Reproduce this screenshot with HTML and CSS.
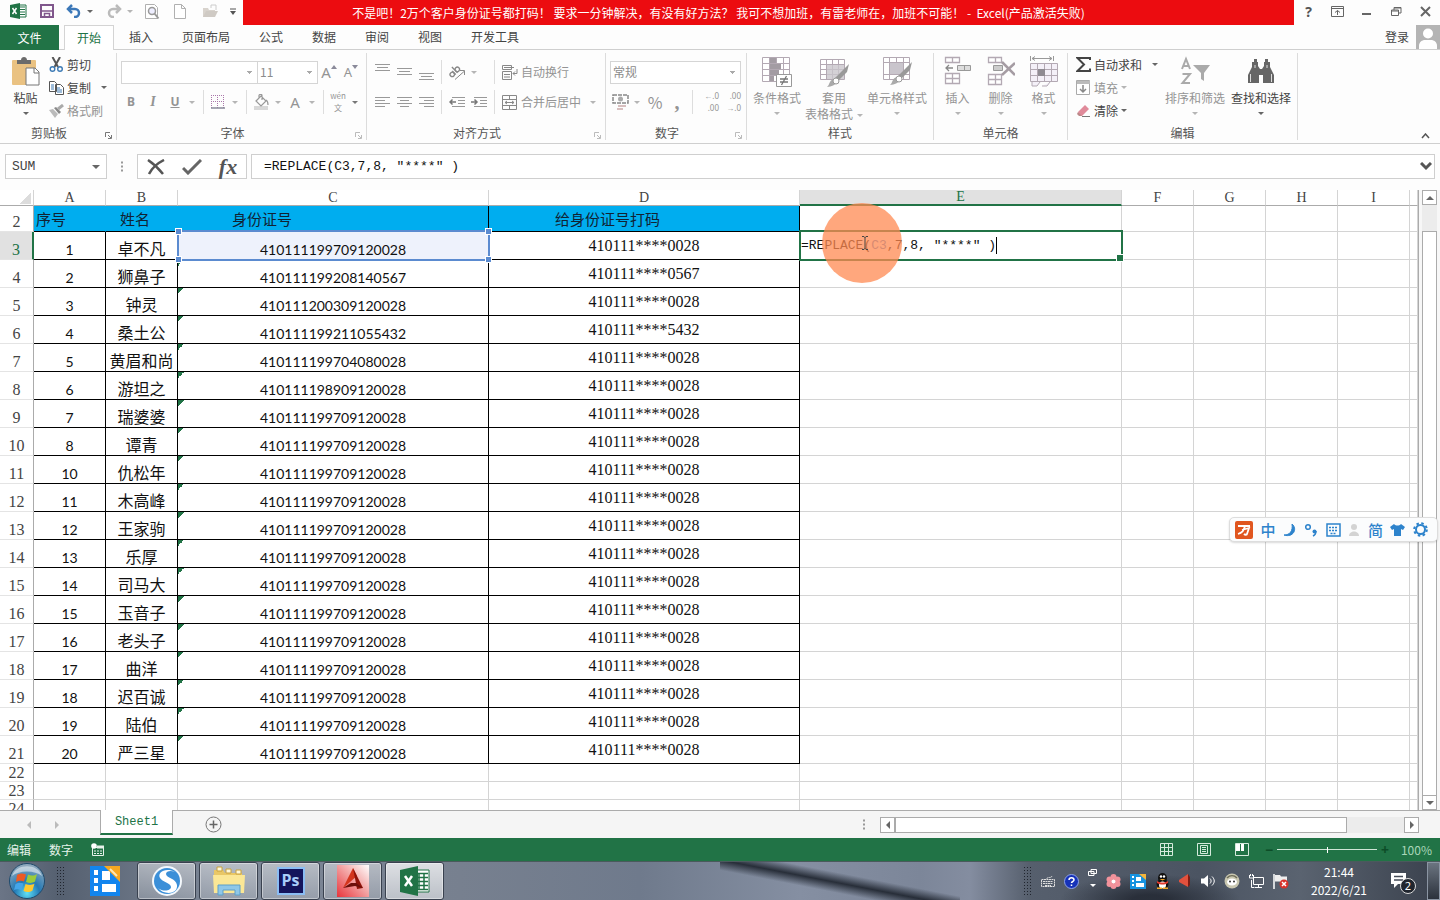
FILE: index.html
```html
<!DOCTYPE html>
<html lang="zh-CN">
<head>
    <meta charset="utf-8">
    <title>Excel</title>
    <link rel="stylesheet" href="styles.css">
</head>
<body>
    <header class="titlebar">
        <div class="quick">
            <span class="q w36"><svg width="18" height="18" viewBox="0 0 18 18"><path d="M9 3h8v12H9z" fill="#fff" stroke="#217346"/><path d="M11 5h5M11 7.500h5M11 10h5M11 12.500h5" stroke="#217346"/><path d="M1 3l10-2v16L1 15z" fill="#217346"/><path d="M3.500 6l4 6M7.500 6l-4 6" stroke="#fff" stroke-width="1.500"/></svg></span>
            <button class="q w22" aria-label="保存"><svg width="14" height="14" viewBox="0 0 14 14"><path d="M1 1h12v12H1z" fill="none" stroke="#80578c" stroke-width="2"/><path d="M2 7h10M4.500 13V9.500h5V13" fill="none" stroke="#80578c" stroke-width="1.500"/></svg></button>
            <button class="q w40" aria-label="撤消"><svg width="16" height="14" viewBox="0 0 16 14"><path d="M2 5h7a4 4 0 0 1 0 8H8" fill="none" stroke="#3c78b8" stroke-width="2.500"/><path d="M6 1L2 5l4 4" fill="none" stroke="#3c78b8" stroke-width="2.500"/></svg><i class="caret"></i></button>
            <button class="q w40 dim" aria-label="恢复"><svg width="16" height="14" viewBox="0 0 16 14"><path d="M14 5H7a4 4 0 0 0 0 8h1M10 1l4 4-4 4" fill="none" stroke="#bbb" stroke-width="2.500"/></svg><i class="caret"></i></button>
            <button class="q w28" aria-label="打印预览"><svg width="16" height="17" viewBox="0 0 16 17"><path d="M1.500 1.500h9l3 3v11h-12z" fill="#fff" stroke="#b0b0b0"/><circle cx="8" cy="8" r="3.500" fill="#eef" stroke="#999" stroke-width="1.500"/><path d="M10.500 10.500l4 5" stroke="#999" stroke-width="2"/></svg></button>
            <button class="q w28" aria-label="新建"><svg width="12" height="15" viewBox="0 0 12 15"><path d="M.5.5h7l4 4v10H.5zM7.500.5v4h4" fill="#fff" stroke="#b0b0b0"/></svg></button>
            <button class="q w32" aria-label="打开"><svg width="16" height="14" viewBox="0 0 16 14"><path d="M1 13V4h5l1 2h6v7z" fill="#d8d3cd"/><path d="M9 4V1h5v5" fill="none" stroke="#ccc"/><path d="M1 13l3-6h12l-3 6z" fill="#cfcac4"/></svg></button>
            <button class="q w14" aria-label="自定义"><svg width="6" height="7" viewBox="0 0 6 7"><path d="M0 1h6" stroke="#555"/><path d="M0 3h6L3 7z" fill="#555"/></svg></button>
        </div>
        <h1 class="title">不是吧！2万个客户身份证号都打码！ 要求一分钟解决，有没有好方法？ 我可不想加班，有雷老师在，加班不可能！ -&nbsp; Excel(产品激活失败)</h1>
        <div class="winbtns">
            <button class="help">?</button>
            <button aria-label="功能区显示选项"><svg width="13" height="11" viewBox="0 0 13 11"><path d="M.5.5h12v10H.5zM.5 2.500h12M6.500 9V4.500M4 6.500l2.500-2L9 6.500" fill="none" stroke="#666"/></svg></button>
            <button aria-label="最小化"><svg width="10" height="10" viewBox="0 0 10 10"><path d="M0 7h9" stroke="#666" stroke-width="2"/></svg></button>
            <button aria-label="还原"><svg width="11" height="11" viewBox="0 0 11 11"><path d="M.5 4h7v5.500h-7zM.5 5h7M3 4V1.500h7v5.500H8M3 2h7" fill="none" stroke="#666"/></svg></button>
            <button aria-label="关闭"><svg width="11" height="11" viewBox="0 0 11 11"><path d="M1 1l9 9M10 1l-9 9" stroke="#666" stroke-width="2"/></svg></button>
        </div>
    </header>

    <nav class="tabs">
        <button class="file">文件</button>
        <button class="tab active">开始</button>
        <button class="tab">插入</button>
        <button class="tab">页面布局</button>
        <button class="tab">公式</button>
        <button class="tab">数据</button>
        <button class="tab">审阅</button>
        <button class="tab">视图</button>
        <button class="tab">开发工具</button>
        <a class="login" href="#">登录</a>
        <svg class="avatar" width="24" height="24" viewBox="0 0 24 24"><rect width="24" height="24" fill="#b4b4b4"/><circle cx="12" cy="8.500" r="5" fill="#fff"/><path d="M3 24v-3c0-4 3-6 6-6h6c3 0 6 2 6 6v3z" fill="#fff"/></svg>
    </nav>

    <section class="ribbon">
        <div class="group g-clip">
            <div class="body">
                <button class="big w42"><svg width="30" height="32" viewBox="0 0 30 32"><rect x="1" y="4" width="24" height="25" rx="1" fill="#eac282"/><path d="M6 8V4h4c0-4 6-4 6 0h4v4z" fill="#6b6b6b"/><path d="M15 12h9l4 4v13H15z" fill="#fff" stroke="#777"/><path d="M23 12v5h5" fill="none" stroke="#777"/></svg><span>粘贴</span><i class="caret"></i></button>
                <div class="stack">
                    <button><svg width="15" height="15" viewBox="0 0 15 15"><path d="M3.500 0l5.500 10M11 0L5.500 10" stroke="#555" stroke-width="2"/><circle cx="3.500" cy="12" r="2.300" fill="none" stroke="#3c7ab5" stroke-width="1.400"/><circle cx="11" cy="12" r="2.300" fill="none" stroke="#3c7ab5" stroke-width="1.400"/></svg>剪切</button>
                    <button><svg width="15" height="14" viewBox="0 0 15 14"><path d="M.5.5h5l2 2v8h-7zM6.500 3.500h5l3 3v7h-8z" fill="#fff" stroke="#555"/><path d="M2 4h3M2 6h3M2 8h3M8 7h3M8 9h5M8 11h5" stroke="#3c7ab5"/></svg>复制<i class="caret far"></i></button>
                    <button class="dim"><svg width="15" height="14" viewBox="0 0 15 14"><path d="M0 6l4-1 5 5-3 4z" fill="#bbb"/><path d="M5 4l2-1 5 5-2 2z" fill="#888"/><path d="M9 5l5-4" stroke="#aaa" stroke-width="3"/></svg>格式刷</button>
                </div>
            </div>
            <div class="label">剪贴板<svg class="launch" width="7" height="7" viewBox="0 0 7 7"><path d="M.5 5V.5H5M3 3l3 3M6.500 3v3.500H3" fill="none" stroke="#777"/></svg></div>
        </div>

        <div class="group g-font dim">
            <div class="body rows">
                <div class="row">
                    <select class="combo font-name" aria-label="字体"><option></option></select>
                    <select class="combo font-size" aria-label="字号"><option>11</option></select>
                    <button class="w22 grow-a">A<svg width="6" height="4" viewBox="0 0 6 4"><path d="M3 0l3 4H0z" fill="#8a8a9a"/></svg></button>
                    <button class="w22 grow-a small">A<svg width="6" height="4" viewBox="0 0 6 4"><path d="M3 4l3-4H0z" fill="#8a8a9a"/></svg></button>
                </div>
                <div class="row">
                    <button class="w20"><b>B</b></button>
                    <button class="w24 ital"><i>I</i></button>
                    <button class="w34"><b class="icon20"><u>U</u></b><i class="caret"></i></button>
                    <span class="sep"></span>
                    <button class="w34" aria-label="边框"><span class="icon20"><svg width="14" height="14" viewBox="0 0 14 14"><path d="M.5 0v13M6.500 0v13M12.500 0v13M0 .5h13M0 6.500h13" stroke="#a7a" stroke-dasharray="1 1" fill="none"/><path d="M0 13h14" stroke="#889" stroke-width="1.500"/></svg></span><i class="caret"></i></button>
                    <span class="sep"></span>
                    <button class="w34" aria-label="填充颜色"><span class="icon20"><svg width="17" height="16" viewBox="0 0 17 16"><rect x="1" y="12" width="14" height="4" fill="#d8d8d8"/><path d="M3 7l5-5 5 5-5 5zM6 5V1.500c0-1.500 3-1.500 3 0V6M13 6c2 1 2 3 2 5" fill="none" stroke="#999" stroke-width="1.200"/></svg></span><i class="caret"></i></button>
                    <button class="w34"><span class="icon20 big-a">A</span><i class="caret"></i></button>
                    <span class="sep"></span>
                    <button class="w34"><span class="icon20 wen"><span>wén</span><span>文</span></span><i class="caret dark"></i></button>
                </div>
            </div>
            <div class="label">字体<svg class="launch" width="7" height="7" viewBox="0 0 7 7"><path d="M.5 5V.5H5M3 3l3 3M6.500 3v3.500H3" fill="none" stroke="#bbb"/></svg></div>
        </div>

        <div class="group g-align dim">
            <div class="body rows">
                <div class="row">
                    <button class="w22" aria-label="顶端对齐"><svg width="15" height="16" viewBox="0 0 15 16"><path d="M0 .5h15M2 3.500h11M0 6.500h15" stroke="#999"/></svg></button>
                    <button class="w22" aria-label="垂直居中"><svg width="15" height="16" viewBox="0 0 15 16"><path d="M0 4.500h15M2 7.500h11M0 10.500h15" stroke="#999"/></svg></button>
                    <button class="w22" aria-label="底端对齐"><svg width="15" height="16" viewBox="0 0 15 16"><path d="M0 9.500h15M2 12.500h11M0 15.500h15" stroke="#999"/></svg></button>
                    <span class="sep"></span>
                    <button class="w44" aria-label="方向"><span class="icon22"><svg width="18" height="17" viewBox="0 0 18 17"><g fill="none" stroke="#888" stroke-width="1.300" transform="rotate(-45 6 8)"><circle cx="3" cy="8.500" r="2.200"/><path d="M5.500 6v5M8 3v8"/><circle cx="10.200" cy="8.500" r="2.200"/></g><path d="M7 15.500l9-8M12 6.500h4.500V11" stroke="#888" fill="none"/></svg></span><i class="caret"></i></button>
                    <span class="sep"></span>
                    <button class="text"><svg width="16" height="15" viewBox="0 0 16 15"><path d="M.5.5h9v4h-9zM.5 6.500h9v8h-9zM2 2.500h10M2 9.500h6M2 12h6M15 4v4.500H11M13 6.500l-2 2 2 2" fill="none" stroke="#888"/></svg>自动换行</button>
                </div>
                <div class="row">
                    <button class="w22" aria-label="左对齐"><svg width="15" height="11" viewBox="0 0 15 11"><path d="M0 .5h15M0 3.500h10M0 6.500h15M0 9.500h10" stroke="#999"/></svg></button>
                    <button class="w22" aria-label="居中"><svg width="15" height="11" viewBox="0 0 15 11"><path d="M0 .5h15M3 3.500h9M0 6.500h15M3 9.500h9" stroke="#999"/></svg></button>
                    <button class="w22" aria-label="右对齐"><svg width="15" height="11" viewBox="0 0 15 11"><path d="M0 .5h15M5 3.500h10M0 6.500h15M5 9.500h10" stroke="#999"/></svg></button>
                    <span class="sep"></span>
                    <button class="w22" aria-label="减少缩进"><svg width="16" height="11" viewBox="0 0 16 11"><path d="M3 .5h13M9 3.500h7M9 6.500h7M3 9.500h13" stroke="#999"/><path d="M1 5h6M3.500 2.500L1 5l2.500 2.500" stroke="#777" fill="none" stroke-width="1.500"/></svg></button>
                    <button class="w22" aria-label="增加缩进"><svg width="16" height="11" viewBox="0 0 16 11"><path d="M3 .5h13M9 3.500h7M9 6.500h7M3 9.500h13" stroke="#999"/><path d="M0 5h6M3.500 2.500L6 5 3.500 7.500" stroke="#777" fill="none" stroke-width="1.500"/></svg></button>
                    <span class="sep"></span>
                    <button class="text"><svg width="16" height="15" viewBox="0 0 16 15"><path d="M.5.5h14v14H.5zM.5 4.500h14M.5 10.500h14M7.500 0v4M7.500 11v4M3 7.500h9M5 6L3 7.500 5 9M10 6l2 1.500L10 9" fill="none" stroke="#888"/></svg>合并后居中<i class="caret"></i></button>
                </div>
            </div>
            <div class="label">对齐方式<svg class="launch" width="7" height="7" viewBox="0 0 7 7"><path d="M.5 5V.5H5M3 3l3 3M6.500 3v3.500H3" fill="none" stroke="#bbb"/></svg></div>
        </div>

        <div class="group g-num dim">
            <div class="body rows">
                <div class="row"><select class="combo format" aria-label="数字格式"><option>常规</option></select></div>
                <div class="row">
                    <button class="w34" aria-label="会计数字格式"><span class="icon20"><svg width="17" height="16" viewBox="0 0 17 16"><path d="M1 1h15v8H1z" fill="none" stroke="#888" stroke-width="1.500" stroke-dasharray="4 1"/><circle cx="8.500" cy="5" r="2.500" fill="#aaa"/><path d="M6 12h8M5 15h6" stroke="#caa" stroke-width="1.500"/></svg></span><i class="caret"></i></button>
                    <button class="w22 pct">%</button>
                    <button class="w22 comma">,</button>
                    <span class="sep"></span>
                    <button class="w22 dec"><span>←.0</span><span>.00</span></button>
                    <button class="w22 dec"><span>.00</span><span>→.0</span></button>
                </div>
            </div>
            <div class="label">数字<svg class="launch" width="7" height="7" viewBox="0 0 7 7"><path d="M.5 5V.5H5M3 3l3 3M6.500 3v3.500H3" fill="none" stroke="#bbb"/></svg></div>
        </div>

        <div class="group g-style dim">
            <div class="body">
                <button class="big w56"><svg width="30" height="32" viewBox="0 0 30 32"><path d="M.5 1.500h27v24H.5zM0 7.500h28M0 13.500h28M0 19.500h28M7.500 1v24M14.500 1v24M21.500 1v24" fill="#fff" stroke="#b3a9b3"/><path d="M8 2h6v5H8zM8 8h11v5H8zM8 14h9v5H8zM8 20h4v5H8z" fill="#a39ca3"/><path d="M14.500 18.500h15v12h-15z" fill="#fff" stroke="#999"/><path d="M18 23h8M18 26h8M24.500 20l-5 9" stroke="#777" stroke-width="1.300"/></svg><span>条件格式</span><i class="caret"></i></button>
                <button class="big w58"><svg width="30" height="32" viewBox="0 0 30 32"><path d="M1.500 3.500h24v20h-24zM1 8.500h25M1 13.500h25M1 18.500h25M7.500 3v20M13.500 3v20M19.500 3v20" fill="#fff" stroke="#b3a9b3"/><path d="M8 9h17v14H8z" fill="#c9c5cc" opacity=".8"/><path d="M30 8l-2 8-9 9-3-3z" fill="#999"/><path d="M8 31c3-2 2-8 8-8 5 1 2 7-8 8z" fill="#aaa"/><circle cx="17" cy="25" r="3" fill="#fff" stroke="#999"/></svg><span>套用</span><span>表格格式<i class="caret"></i></span></button>
                <button class="big w68"><svg width="30" height="32" viewBox="0 0 30 32"><path d="M1.500 1.500h26v22h-26zM1 6.500h27M1 18.500h27M7.500 1v23M14.500 1v6M21.500 1v23" fill="#fff" stroke="#b3a9b3"/><path d="M8 7h13v11H8z" fill="#c9c5cc"/><path d="M30 6l-2 8-9 9-3-3z" fill="#999"/><path d="M8 29c3-2 2-8 8-8 5 1 2 7-8 8z" fill="#aaa"/><circle cx="17" cy="23" r="3" fill="#fff" stroke="#999"/></svg><span>单元格样式</span><i class="caret"></i></button>
            </div>
            <div class="label">样式</div>
        </div>

        <div class="group g-cells dim">
            <div class="body">
                <button class="big w42"><svg width="28" height="32" viewBox="0 0 28 32"><path d="M1.500 1.500h14v5h-14zM8.500 1v6M1.500 17.500h14v10h-14zM1.500 22.500h14M8.500 17v11" fill="#fff" stroke="#b3a9b3" stroke-width="1.300"/><path d="M13.500 9.500h13v5h-13zM20.500 9v6" fill="#ddd" stroke="#999"/><path d="M2 12h7M5 9l-3 3 3 3" fill="none" stroke="#888" stroke-width="1.300"/></svg><span>插入</span><i class="caret"></i></button>
                <button class="big w42"><svg width="28" height="32" viewBox="0 0 28 32"><path d="M1.500 1.500h13v5h-13zM8.500 1v6M1.500 18.500h13v10h-13zM1.500 23.500h13M8.500 18v11" fill="#fff" stroke="#b3a9b3" stroke-width="1.300"/><path d="M6.500 9.500h9v5h-9z" fill="#ccc" stroke="#999"/><path d="M15 6l13 13M28 7L15 19" stroke="#a59ca3" stroke-width="2.500"/></svg><span>删除</span><i class="caret"></i></button>
                <button class="big w42"><svg width="28" height="32" viewBox="0 0 28 32"><path d="M.5 0v5M23.500 0v5M2 2.500h20M5 .5l-3 2 3 2M19 .5l3 2-3 2" fill="none" stroke="#999"/><path d="M.5 7.500h27v18H.5zM0 13.500h28M0 19.500h28M7.500 7v19M14.500 7v19M21.500 7v19M2 26v4h5l3-4M12 30h5l3-4" fill="#f4f0f8" stroke="#b3a9b3"/><path d="M8 13h7v7H8z" fill="#8f8b92"/></svg><span>格式</span><i class="caret"></i></button>
            </div>
            <div class="label">单元格</div>
        </div>

        <div class="group g-edit">
            <div class="body">
                <div class="stack">
                    <button><svg width="15" height="15" viewBox="0 0 15 15"><path d="M14 3V1H1.500L8 7.500 1.500 14H14v-2.500" fill="none" stroke="#444" stroke-width="2"/></svg>自动求和<i class="caret far"></i></button>
                    <button class="dim"><svg width="15" height="15" viewBox="0 0 15 15"><path d="M.5.5h13v14H.5z" fill="#fff" stroke="#aaa"/><path d="M1 1h13v3H1z" fill="#bbb"/><path d="M7 5v7M4 9l3 3 3-3" fill="none" stroke="#888" stroke-width="1.500"/></svg>填充<i class="caret"></i></button>
                    <button><svg width="15" height="13" viewBox="0 0 15 13"><path d="M2 8l7-7 4 4-7 7H4z" fill="#e08a9a"/><path d="M2 8l4 4H3L1 10z" fill="#b88"/><path d="M6 12.500h8" stroke="#777"/></svg>清除<i class="caret"></i></button>
                </div>
                <button class="big w66 dim"><svg width="30" height="32" viewBox="0 0 30 32"><path d="M2 13L6 3l4 10M3.500 10h5" fill="none" stroke="#aaa" stroke-width="2"/><path d="M2.500 18H10l-7.500 9H10" fill="none" stroke="#aaa" stroke-width="2"/><path d="M13 9h17l-6 8v8l-3-2v-6z" fill="#aaa"/></svg><span>排序和筛选</span><i class="caret"></i></button>
                <button class="big w66"><svg width="28" height="32" viewBox="0 0 28 32"><path d="M5 6h6v4l2 3h2l2-3V6h6v5l4 8v8H16v-8h-4v8H1v-8l4-8z" fill="#666"/><path d="M7 3h3v3H7zM18 3h3v3h-3z" fill="#666"/><path d="M3.500 18v8M24.500 18v8M8 9v3M20 9v3" stroke="#ddd"/></svg><span>查找和选择</span><i class="caret"></i></button>
            </div>
            <div class="label">编辑</div>
        </div>
        <button class="collapse" aria-label="折叠功能区"><svg width="9" height="6" viewBox="0 0 9 6"><path d="M1 5l3.500-4L8 5" fill="none" stroke="#555" stroke-width="1.500"/></svg></button>
    </section>

    <section class="formula-bar">
        <div class="namebox"><input type="text" value="SUM" aria-label="名称框"><i class="caret"></i></div>
        <span class="dots"></span>
        <div class="fx-buttons">
            <button aria-label="取消"><svg width="18" height="16" viewBox="0 0 18 16"><path d="M1 1c6 4 11 9 15 14M17 1C11 4 5 9 2 15" fill="none" stroke="#555" stroke-width="2.500"/></svg></button>
            <button aria-label="输入"><svg width="20" height="16" viewBox="0 0 20 16"><path d="M1 9l5 5L19 1" fill="none" stroke="#666" stroke-width="3"/></svg></button>
            <button class="fx" aria-label="插入函数"><i>fx</i></button>
        </div>
        <div class="formula"><input type="text" aria-label="编辑栏" value="=REPLACE(C3,7,8, &quot;****&quot; )"><svg width="12" height="9" viewBox="0 0 12 9"><path d="M1 1l5 5 5-5" fill="none" stroke="#555" stroke-width="3"/></svg></div>
    </section>

    <main class="sheet">
        <div class="grid">
            <table>
                <colgroup><col class="c-head"><col class="c-std"><col class="c-std"><col class="c-wide"><col class="c-wide"><col class="c-e"><col class="c-std"><col class="c-std"><col class="c-std"><col class="c-std"><col></colgroup>
                <thead><tr><th class="corner"></th><th>A</th><th>B</th><th>C</th><th>D</th><th class="sel">E</th><th>F</th><th>G</th><th>H</th><th>I</th><th></th></tr></thead>
                <tbody class="head">
                    <tr><th>2</th><td>序号</td><td>姓名</td><td>身份证号</td><td>给身份证号打码</td><td></td><td></td><td></td><td></td><td></td><td></td></tr>
                </tbody>
                <tbody class="data">
                    <tr class="current"><th>3</th><td>1</td><td>卓不凡</td><td class="ref">410111199709120028<span class="ref-box"><i></i><i></i><i></i><i></i></span></td><td>410111****0028</td><td class="edit"><span class="edit-box">=REPLACE(<em>C3</em>,7,8, "****" )</span><span class="click"></span><svg class="ibeam" width="8" height="14" viewBox="0 0 8 14"><path d="M1 .5h2l1 1 1-1h2M4 1v12M1 13.500h2l1-1 1 1h2" fill="none" stroke="#444"/></svg></td><td></td><td></td><td></td><td></td><td></td></tr>
                    <tr><th>4</th><td>2</td><td>狮鼻子</td><td>410111199208140567</td><td>410111****0567</td><td></td><td></td><td></td><td></td><td></td><td></td></tr>
                    <tr><th>5</th><td>3</td><td>钟灵</td><td>410111200309120028</td><td>410111****0028</td><td></td><td></td><td></td><td></td><td></td><td></td></tr>
                    <tr><th>6</th><td>4</td><td>桑土公</td><td>410111199211055432</td><td>410111****5432</td><td></td><td></td><td></td><td></td><td></td><td></td></tr>
                    <tr><th>7</th><td>5</td><td>黄眉和尚</td><td>410111199704080028</td><td>410111****0028</td><td></td><td></td><td></td><td></td><td></td><td></td></tr>
                    <tr><th>8</th><td>6</td><td>游坦之</td><td>410111198909120028</td><td>410111****0028</td><td></td><td></td><td></td><td></td><td></td><td></td></tr>
                    <tr><th>9</th><td>7</td><td>瑞婆婆</td><td>410111199709120028</td><td>410111****0028</td><td></td><td></td><td></td><td></td><td></td><td></td></tr>
                    <tr><th>10</th><td>8</td><td>谭青</td><td>410111199709120028</td><td>410111****0028</td><td></td><td></td><td></td><td></td><td></td><td></td></tr>
                    <tr><th>11</th><td>10</td><td>仇松年</td><td>410111199709120028</td><td>410111****0028</td><td></td><td></td><td></td><td></td><td></td><td></td></tr>
                    <tr><th>12</th><td>11</td><td>木高峰</td><td>410111199709120028</td><td>410111****0028</td><td></td><td></td><td></td><td></td><td></td><td></td></tr>
                    <tr><th>13</th><td>12</td><td>王家驹</td><td>410111199709120028</td><td>410111****0028</td><td></td><td></td><td></td><td></td><td></td><td></td></tr>
                    <tr><th>14</th><td>13</td><td>乐厚</td><td>410111199709120028</td><td>410111****0028</td><td></td><td></td><td></td><td></td><td></td><td></td></tr>
                    <tr><th>15</th><td>14</td><td>司马大</td><td>410111199709120028</td><td>410111****0028</td><td></td><td></td><td></td><td></td><td></td><td></td></tr>
                    <tr><th>16</th><td>15</td><td>玉音子</td><td>410111199709120028</td><td>410111****0028</td><td></td><td></td><td></td><td></td><td></td><td></td></tr>
                    <tr><th>17</th><td>16</td><td>老头子</td><td>410111199709120028</td><td>410111****0028</td><td></td><td></td><td></td><td></td><td></td><td></td></tr>
                    <tr><th>18</th><td>17</td><td>曲洋</td><td>410111199709120028</td><td>410111****0028</td><td></td><td></td><td></td><td></td><td></td><td></td></tr>
                    <tr><th>19</th><td>18</td><td>迟百诚</td><td>410111199709120028</td><td>410111****0028</td><td></td><td></td><td></td><td></td><td></td><td></td></tr>
                    <tr><th>20</th><td>19</td><td>陆伯</td><td>410111199709120028</td><td>410111****0028</td><td></td><td></td><td></td><td></td><td></td><td></td></tr>
                    <tr><th>21</th><td>20</td><td>严三星</td><td>410111199709120028</td><td>410111****0028</td><td></td><td></td><td></td><td></td><td></td><td></td></tr>
                </tbody>
                <tbody class="empty">
                    <tr><th>22</th><td></td><td></td><td></td><td></td><td></td><td></td><td></td><td></td><td></td><td></td></tr>
                    <tr><th>23</th><td></td><td></td><td></td><td></td><td></td><td></td><td></td><td></td><td></td><td></td></tr>
                    <tr><th>24</th><td></td><td></td><td></td><td></td><td></td><td></td><td></td><td></td><td></td><td></td></tr>
                </tbody>
            </table>
        </div>
        <div class="vscroll">
            <button aria-label="向上滚动"><i class="tri up"></i></button>
            <span class="thumb"></span>
            <button aria-label="向下滚动"><i class="tri down"></i></button>
        </div>
    </main>

    <div class="sheet-tabs">
        <button class="nav" aria-label="上一个"><i class="tri left"></i></button>
        <button class="nav" aria-label="下一个"><i class="tri right"></i></button>
        <button class="sheet-tab">Sheet1</button>
        <button class="add" aria-label="新工作表"><svg width="17" height="17" viewBox="0 0 17 17"><circle cx="8.500" cy="8.500" r="7.500" fill="none" stroke="#777"/><path d="M8.500 4.500v8M4.500 8.500h8" stroke="#666" stroke-width="1.500"/></svg></button>
        <span class="dots"></span>
        <div class="hscroll">
            <button aria-label="向左滚动"><i class="tri left"></i></button>
            <span class="thumb"></span>
            <button aria-label="向右滚动"><i class="tri right"></i></button>
        </div>
    </div>

    <footer class="status">
        <span>编辑</span>
        <span>数字</span>
        <svg width="14" height="14" viewBox="0 0 14 14"><path d="M1.500 4.500h11v8h-11z" fill="none" stroke="#e6f2ea"/><path d="M6 2.500h7v3H6z" fill="#e6f2ea"/><circle cx="3" cy="3" r="2.800" fill="#fff"/><path d="M3 8h8M3 10.500h8" stroke="#e6f2ea" stroke-dasharray="2 1"/></svg>
        <div class="status-right">
            <button aria-label="普通"><svg width="13" height="13" viewBox="0 0 13 13"><path d="M.5.5h12v12H.5zM4.500 0v13M8.500 0v13M0 4.500h13M0 8.500h13" fill="none" stroke="#d5eadc"/></svg></button>
            <button aria-label="页面布局"><svg width="14" height="13" viewBox="0 0 14 13"><path d="M.5.5h13v12H.5zM3.500 2.500h7v8h-7zM5 4.500h4M5 6.500h4M5 8.500h4" fill="none" stroke="#d5eadc"/></svg></button>
            <button aria-label="分页预览"><svg width="14" height="13" viewBox="0 0 14 13"><path d="M.5.5h13v12H.5z" fill="none" stroke="#d5eadc"/><path d="M1 1h4v7H1zM6 1h3v7H6z" fill="#fff"/></svg></button>
            <span class="zoom-sign">−</span>
            <input type="range" min="0" max="100" value="50" aria-label="缩放">
            <span class="zoom-sign">+</span>
            <span class="zoom">100%</span>
        </div>
    </footer>

    <div class="taskbar">
        <button class="start" aria-label="开始"><svg width="38" height="38" viewBox="0 0 38 38"><defs><radialGradient id="orb" cx="50%" cy="85%" r="80%"><stop offset="0" stop-color="#5fe0f5"/><stop offset=".45" stop-color="#2379b5"/><stop offset="1" stop-color="#8fa9bd"/></radialGradient></defs><circle cx="19" cy="19" r="17.500" fill="url(#orb)" stroke="#1f4a6c"/><path d="M9 13c3-2 6-2 9-.5l-2 7c-3-1-5-1-8 .5z" fill="#ee5a24"/><path d="M20 12.500c3 1.500 6 1.500 9-.5l-2 7.500c-3 2-6 1.500-9 .5z" fill="#9ccb3b"/><path d="M7.500 22c3-1.500 5-1.500 8-.5l-2 7c-3-1.500-5-1.500-7.500-.5z" fill="#45a5e8"/><path d="M17.500 22c3 1 6 1.500 9-.5l-2 7c-3 2-6 2-9 .5z" fill="#fdc82f"/><path d="M4 14C8 1 30 1 34 14 27 8 11 8 4 14z" fill="#fff" opacity=".5"/></svg></button>
        <span class="grip"></span>
        <button class="pin" aria-label="桌面助手"><svg width="30" height="30" viewBox="0 0 30 30"><rect width="30" height="30" fill="#1285ee"/><path d="M4 4h4v5H4zM4 12h4v5H4zM4 20h4v5H4zM12 5h8v9h-8zM12 18h14v8H12z" fill="#fff"/><path d="M14 0h16v16z" fill="#f6a821"/><path d="M20 3l7 7" stroke="#fde7b5" stroke-width="2"/></svg></button>
        <div class="apps">
            <button class="app" aria-label="浏览器"><svg width="30" height="30" viewBox="0 0 30 30"><circle cx="15" cy="15" r="15" fill="#f4f8fc"/><circle cx="15" cy="15" r="13" fill="#3b8fd8"/><path d="M23 6C13 1 5 7 8 12c2 4 11 5 11 9 0 4-8 5-13 1 5 7 20 7 19-3-1-7-11-7-11-11 0-3 5-4 9-2z" fill="#fff"/></svg></button>
            <button class="app" aria-label="资源管理器"><svg width="34" height="30" viewBox="0 0 34 30"><path d="M2 4h9l2 3h17v19H2z" fill="#e9c766"/><path d="M5 1h5v4H5zM14 3h5v4h-5zM24 4h5v4h-5z" fill="#fff8d8" stroke="#c9a23c"/><path d="M1 9h32l-1 18H2z" fill="#fbe796"/><path d="M6 29V19h22v10h-5v-5H11v5z" fill="#8fc7e8" stroke="#5d9fc8"/></svg></button>
            <button class="app" aria-label="Photoshop"><span class="ps">Ps</span></button>
            <button class="app" aria-label="AutoCAD"><svg width="32" height="32" viewBox="0 0 32 32"><defs><linearGradient id="cad" x1="0" y1="1" x2="1" y2="0"><stop offset="0" stop-color="#e8333a"/><stop offset=".55" stop-color="#f3a6a6"/><stop offset="1" stop-color="#fff"/></linearGradient></defs><rect width="32" height="32" fill="url(#cad)"/><path d="M6 23L16 3l4 8z" fill="#d3351d"/><path d="M16 3l10 20-6 1z" fill="#8e1309"/><path d="M6 23l8-5h5l7 5-8-2z" fill="#6b0f0a"/></svg></button>
            <button class="app active" aria-label="Excel"><svg width="30" height="30" viewBox="0 0 30 30"><path d="M14 4h15v22H14z" fill="#fff" stroke="#217346"/><path d="M19 7v16M24 7v16M16 7.500h12M16 11.500h12M16 15.500h12M16 19.500h12M16 23.500h12" stroke="#217346" stroke-width="1.500"/><path d="M0 4l18-4v30L0 26z" fill="#217346"/><path d="M5 10l7 10M12 10L5 20" stroke="#fff" stroke-width="2.500"/></svg></button>
        </div>
        <div class="tray">
            <span class="grip"></span>
            <svg width="14" height="12" viewBox="0 0 14 12"><path d="M.5 4.500h13v7H.5zM2 6.500h10M2 8.500h10M4 10.500h6M6 4c0-3 4 0 5-3" fill="none" stroke="#ddd" stroke-dasharray="2 0.500"/></svg>
            <svg width="15" height="15" viewBox="0 0 15 15"><circle cx="7.500" cy="7.500" r="7" fill="#1632b8" stroke="#8fa3e6"/><path d="M5 6c0-3 5-3 5 0 0 1.500-2.500 1.500-2.500 3M7.500 10.500v1.500" fill="none" stroke="#fff" stroke-width="1.500"/></svg>
            <svg width="9" height="24" viewBox="0 0 9 24"><path d="M3 .5h5.500v4H3zM.5 2.500h5.500v4H.5z" fill="#555c68" stroke="#fff"/><path d="M2 15h6l-3 3z" fill="#fff"/></svg>
            <svg width="15" height="15" viewBox="0 0 15 15"><g fill="#f2929b"><circle cx="7.500" cy="3" r="3"/><circle cx="11.500" cy="5.500" r="3"/><circle cx="11.500" cy="10" r="3"/><circle cx="7.500" cy="12" r="3"/><circle cx="3.500" cy="10" r="3"/><circle cx="3.500" cy="5.500" r="3"/></g><circle cx="7.500" cy="7.500" r="2" fill="#fff"/></svg>
            <svg width="16" height="15" viewBox="0 0 16 15"><rect width="16" height="15" fill="#1793e0"/><path d="M2 2h2v2H2zM2 6h2v2H2zM2 10h2v2H2zM6 3h5v4H6zM6 9h8v4H6z" fill="#fff"/><path d="M9 0h7v6z" fill="#f6b53a"/></svg>
            <svg width="15" height="16" viewBox="0 0 15 16"><ellipse cx="7.500" cy="5" rx="4.500" ry="5" fill="#111"/><ellipse cx="7.500" cy="11" rx="6" ry="5" fill="#111"/><ellipse cx="7.500" cy="12" rx="3.500" ry="3.500" fill="#fff"/><path d="M2 8c4 2 7 2 11 0v2c-4 2-7 2-11 0z" fill="#e23a2e"/><circle cx="6" cy="3.500" r="1.200" fill="#fff"/><circle cx="9" cy="3.500" r="1.200" fill="#fff"/><path d="M4.500 6h6l-3 1.500zM2 14.500h5v1.500H2zM8 14.500h5v1.500H8z" fill="#f5a623"/></svg>
            <svg width="12" height="14" viewBox="0 0 12 14"><path d="M0 6l9-6v13L0 8z" fill="#e2513d"/><path d="M9 0l2 3v8L9 13z" fill="#7d1d14"/></svg>
            <svg width="15" height="14" viewBox="0 0 15 14"><path d="M1 4.500h3L8 1v12L4 9.500H1z" fill="#fff"/><path d="M10 4.500c1.500 1.500 1.500 3.500 0 5M12 2.500c3 3 3 6 0 9" fill="none" stroke="#fff"/></svg>
            <svg width="16" height="16" viewBox="0 0 16 16"><circle cx="8" cy="8" r="7.500" fill="#c9c7b0"/><ellipse cx="8" cy="9" rx="5" ry="3.500" fill="#fff"/><path d="M3 5c3-3 7-3 10 0" stroke="#6d6c58" stroke-width="1.500" fill="none"/><circle cx="6" cy="8.500" r="1" fill="#333"/><circle cx="10" cy="8.500" r="1" fill="#333"/></svg>
            <svg width="15" height="15" viewBox="0 0 15 15"><path d="M4.500 3.500h10v7h-10zM9.500 11v2.500M6 13.500h7" fill="#555c68" stroke="#fff"/><path d="M2.500 6v7.500h3M.5 1v3h4V1M1.500 0v2M3.500 0v2" fill="none" stroke="#fff"/></svg>
            <svg width="16" height="15" viewBox="0 0 16 15"><path d="M1 0v15" stroke="#fff" stroke-width="1.500"/><path d="M2 1h5l1 1.500h6V9H8L7 7.500H2z" fill="#eee"/><circle cx="11" cy="10" r="4.500" fill="#d8322a"/><path d="M9 8l4 4M13 8l-4 4" stroke="#fff" stroke-width="1.500"/></svg>
            <div class="clock"><span>21:44</span><span>2022/6/21</span></div>
            <div class="notify"><svg width="18" height="18" viewBox="0 0 18 18"><path d="M1 1h15v11H8l-4 4v-4H1z" fill="#fff"/><path d="M4 4.500h9M4 8h9" stroke="#444b57" stroke-width="1.500"/></svg><b>2</b></div>
            <button class="desktop" aria-label="显示桌面"></button>
        </div>
    </div>

    <div class="ime">
        <span class="wan"><svg width="14" height="14" viewBox="0 0 14 14"><path d="M1 3h12M8 3C7 8 5 10 1 11M5 7l7-2-2 6c0 1-2 1-3 0" fill="none" stroke="#fff" stroke-width="1.800"/></svg></span>
        <b>中</b>
        <svg width="14" height="14" viewBox="0 0 14 14"><path d="M9 1c6 5 1 14-8 11 6 0 9-4 8-11z" fill="#2d83cc" stroke="#2d83cc"/></svg>
        <svg width="14" height="14" viewBox="0 0 14 14"><circle cx="4" cy="4" r="2.300" fill="none" stroke="#2d83cc" stroke-width="1.500"/><circle cx="10.500" cy="8.500" r="2" fill="#2d83cc"/><path d="M12 8c0 3-1 4-3 5" fill="none" stroke="#2d83cc" stroke-width="1.500"/></svg>
        <svg width="15" height="14" viewBox="0 0 15 14"><path d="M1 1h13v12H1z" fill="none" stroke="#2d83cc" stroke-width="1.500"/><path d="M3 4.500h9M3 7.500h9M4.500 10.500h6" stroke="#2d83cc" stroke-width="1.500" stroke-dasharray="2 1"/></svg>
        <svg width="12" height="14" viewBox="0 0 12 14"><circle cx="6" cy="4" r="3" fill="#d3d3d3"/><path d="M1 13c0-6 10-6 10 0z" fill="#d3d3d3"/></svg>
        <b>简</b>
        <svg width="15" height="14" viewBox="0 0 15 14"><path d="M4 1c2 2 5 2 7 0l4 3-2 3-2-1v7H4V6L2 7 0 4z" fill="#2d83cc"/></svg>
        <svg width="15" height="15" viewBox="0 0 15 15"><circle cx="7.500" cy="7.500" r="4.500" fill="none" stroke="#2d83cc" stroke-width="2"/><circle cx="7.500" cy="7.500" r="6.300" fill="none" stroke="#2d83cc" stroke-width="2" stroke-dasharray="2.500 2.450"/></svg>
    </div>
</body>
</html>
```

FILE: styles.css
```css
* {
    box-sizing: border-box;
}

body {
    margin: 0;
    height: 100vh;
    overflow: hidden;
    display: flex;
    flex-direction: column;
    background: #fdfdfd;
    color: #444;
    font: 12px/16px "Noto Sans CJK SC", sans-serif;
}

button {
    display: flex;
    align-items: center;
    padding: 0;
    border: none;
    background: none;
    color: inherit;
    font: inherit;
    white-space: nowrap;
}

input, select {
    font: inherit;
    color: inherit;
    outline: none;
}

svg {
    flex: none;
}

.caret {
    flex: none;
    display: inline-block;
    border: 3px solid transparent;
    border-top-color: #666;
    border-bottom: none;
}

.dim { color: #949494; }
.dim .caret { border-top-color: #b5b5b5; }
.dim .caret.dark { border-top-color: #777; }

.w14 { width: 14px; }
.w20 { width: 20px; }
.w22 { width: 22px; }
.w24 { width: 24px; }
.w28 { width: 28px; }
.w32 { width: 32px; }
.w34 { width: 34px; }
.w36 { width: 36px; }
.w40 { width: 40px; }
.w42 { width: 43px; }
.w44 { width: 44px; }
.w56 { width: 56px; }
.w58 { width: 58px; }
.w66 { width: 66px; }
.w68 { width: 68px; }

/* title bar */
.titlebar {
    flex: none;
    display: flex;
    height: 25px;
}

.quick {
    display: flex;
    align-items: center;
    width: 243px;
    padding: 0 0 3px;
}

.q {
    flex: none;
    display: flex;
    align-items: center;
    justify-content: center;
}

.w40 {
    justify-content: flex-end;
    gap: 5px;
    padding-right: 5px;
}

.title {
    flex: 1;
    margin: 0;
    padding-right: 100px;
    background: #ec0c10;
    color: #fff;
    font-size: 12px;
    font-weight: normal;
    line-height: 25px;
    text-align: center;
    white-space: pre;
    overflow: hidden;
}

.winbtns {
    display: flex;
    width: 146px;
    padding-bottom: 2px;
}

.winbtns button {
    flex: 1;
    justify-content: center;
}

.winbtns .help {
    color: #555;
    font: bold 14px "Noto Sans", sans-serif;
}

/* tabs */
.tabs {
    flex: none;
    display: flex;
    gap: 1px;
    height: 25px;
    border-bottom: 1px solid #cfcfcf;
}

.file {
    width: 59px;
    height: 25px;
    justify-content: center;
    background: #217346;
    color: #fff;
}

.tab {
    padding: 0 14px;
    color: #444;
}

.tab.active {
    height: 25px;
    margin-left: 4px;
    padding: 0 12px;
    background: #fff;
    border: 1px solid #d4d4d4;
    border-bottom: none;
    color: #217346;
}

.login {
    margin-left: auto;
    padding-right: 6px;
    color: #444;
    line-height: 23px;
    text-decoration: none;
}

/* ribbon */
.ribbon {
    flex: none;
    display: flex;
    height: 94px;
    border-bottom: 1px solid #cfcfcf;
}

.group {
    display: flex;
    flex-direction: column;
    margin-top: 3px;
    height: 87px;
    border-right: 1px solid #dcdcdc;
}

.g-clip { width: 117px; }
.g-font { width: 250px; }
.g-align { width: 239px; }
.g-num { width: 141px; }
.g-style { width: 187px; }
.g-cells { width: 134px; }
.g-edit { width: 230px; }

.body {
    flex: 1;
    min-height: 0;
    display: flex;
    padding: 0 2px;
}

.g-clip .body { padding-left: 4px; }
.g-edit .body { padding-left: 8px; }

.body.rows {
    flex-direction: column;
    padding: 4px 4px 0;
}

.row {
    display: flex;
    align-items: center;
    height: 30px;
}

.row button {
    flex: none;
    justify-content: center;
    height: 24px;
}

.row .text {
    justify-content: flex-start;
    gap: 3px;
    padding-left: 3px;
}

.text .caret { margin-left: 6px; }

.row .w34, .row .w44 {
    justify-content: flex-start;
}

.icon20, .icon22 {
    display: flex;
    flex: none;
    justify-content: center;
    width: 22px;
    margin-right: 3px;
}

.icon20 {
    width: 20px;
    margin-right: 4px;
}

.row b {
    font-family: "Noto Sans", sans-serif;
    font-size: 12px;
}

.row .ital { font: bold 14px "Liberation Serif", serif; }

.row .big-a, .row .grow-a { font: 15px "Noto Sans", sans-serif; }
.row .grow-a.small { font-size: 13px; }
.grow-a svg { margin-bottom: 10px; }

.row .wen {
    flex-direction: column;
    align-items: center;
    font-size: 8px;
    line-height: 12px;
}

.row .pct { font-size: 16px; }
.row .comma { font: bold 20px "Liberation Serif", serif; }

.row .dec {
    flex-direction: column;
    align-items: flex-end;
    font: 8px/12px "Noto Sans", sans-serif;
}

.sep {
    width: 1px;
    height: 24px;
    margin: 0 4px;
    background: #ddd;
}

.combo {
    height: 23px;
    padding: 0 16px 0 2px;
    border: 1px solid #d5d5d5;
    border-radius: 0;
    appearance: none;
    background:
        linear-gradient(#aaa, #aaa) right 5px top 9px / 5px 1px no-repeat,
        linear-gradient(#aaa, #aaa) right 6px top 10px / 3px 1px no-repeat,
        linear-gradient(#aaa, #aaa) right 7px top 11px / 1px 1px no-repeat,
        #fff;
    color: #8c8c8c;
}

.font-name { width: 137px; }
.font-size { width: 61px; margin-left: -1px; }
.format { width: 131px; }

.big {
    flex: none;
    flex-direction: column;
    align-self: flex-start;
    padding-top: 3px;
}

.big svg { margin-bottom: 2px; }
.big .caret { margin-top: 6px; }
.big span .caret { margin: 0 0 2px 4px; }
.g-clip .big { margin-right: 2px; }

.stack {
    flex: none;
    display: flex;
    flex-direction: column;
    width: 86px;
}

.g-clip .stack { width: 64px; }

.stack button {
    gap: 3px;
    height: 23px;
}

.stack .far { margin-left: 7px; }

.label {
    position: relative;
    flex: none;
    height: 14px;
    line-height: 14px;
    padding-right: 18px;
    color: #555;
    text-align: center;
}

.g-style .label, .g-cells .label, .g-edit .label { padding-right: 0; }

.launch {
    position: absolute;
    right: 4px;
    bottom: 1px;
}

.collapse {
    margin: auto 10px 4px auto;
}

/* formula bar */
.formula-bar {
    flex: none;
    display: flex;
    gap: 4px;
    padding: 10px 5px 11px;
    height: 46px;
    font: 13px/22px "Liberation Mono", monospace;
}

.namebox {
    display: flex;
    align-items: center;
    width: 102px;
    padding: 0 6px;
    border: 1px solid #cfcfcf;
    background: #fff;
}

.namebox .caret {
    border-width: 4px;
    border-bottom: none;
}

.namebox input {
    flex: 1;
    min-width: 0;
    padding: 0;
    border: none;
}

.dots {
    width: 22px;
    background: radial-gradient(circle, #999 1px, transparent 1px) center / 22px 4px repeat-y;
    margin: 6px 0;
}

.fx-buttons {
    display: flex;
    width: 110px;
    border: 1px solid #cfcfcf;
    background: #fff;
}

.fx-buttons button {
    flex: 1;
    justify-content: center;
}

.fx-buttons .fx {
    color: #555;
    font: bold 22px/20px "Liberation Serif", serif;
}

.formula {
    flex: 1;
    display: flex;
    align-items: center;
    padding-right: 2px;
    border: 1px solid #cfcfcf;
    background: #fff;
    color: #111;
}

.formula input {
    flex: 1;
    padding: 0 12px;
    border: none;
}

/* sheet */
.sheet {
    flex: 1;
    min-height: 0;
    display: flex;
    background: #f7f7f7;
}

.grid {
    flex: 1;
    overflow: hidden;
    border-right: 1px solid #ababab;
    background: #fff;
}

table {
    width: 100%;
    table-layout: fixed;
    border-collapse: separate;
    border-spacing: 0;
}

.c-head { width: 34px; }
.c-std { width: 72px; }
.c-wide { width: 311px; }
.c-e { width: 322px; }

th, td {
    padding: 0;
    border-right: 1px solid #d4d4d4;
    border-bottom: 1px solid #d4d4d4;
    overflow: visible;
    white-space: nowrap;
}

th {
    color: #444;
    font: 16px/16px "Liberation Serif", serif;
}

thead th {
    height: 16px;
    border-bottom-color: #ababab;
    font-size: 14px;
    line-height: 14px;
}

thead .corner {
    background: linear-gradient(135deg, transparent 50%, #dcdcdc 50%) 20px 3px / 11px 11px no-repeat;
}

thead .sel {
    border-bottom: 2px solid #217346;
    background: #e1e1e1;
    color: #217346;
}

tbody th {
    border-right-color: #ababab;
    border-bottom-color: #e4e4e4;
    vertical-align: bottom;
}

.head tr { height: 26px; }
.data tr { height: 28px; }
.empty tr { height: 18px; }

.head th, .data th { line-height: 18px; }

.head td {
    font-size: 15px;
    line-height: 20px;
}

.head td:nth-child(-n+5) {
    background: #00adef;
    border-bottom-color: #000;
    border-right-color: #00adef;
    color: #123;
}

.head td:nth-child(2) { padding-left: 2px; }
.head td:nth-child(3) { padding-left: 14px; }
.head td:nth-child(4) { padding-left: 54px; }
.head td:nth-child(5) { padding-left: 66px; }
.head td:nth-child(n+4):nth-child(-n+5) { border-right-color: #000; }

.data td:nth-child(-n+5) {
    border-color: #000;
    color: #111;
    text-align: center;
    vertical-align: bottom;
    font: 14px/18px Lato, sans-serif;
}

.data td:nth-child(3) {
    font: 16px/21px "Noto Sans CJK SC", sans-serif;
}

.data td:nth-child(4) {
    background: linear-gradient(135deg, #217346 50%, transparent 50%) 0 0 / 6px 6px no-repeat;
}

.data td:nth-child(5) {
    font: 16px/22px "Liberation Serif", serif;
    vertical-align: middle;
}

.data .current th {
    background: #e1e1e1;
    border-right: 2px solid #217346;
    color: #217346;
}

.data td.ref {
    position: relative;
    background: #eef2fc;
}

/* range highlight around the referenced cell */
.ref-box {
    position: absolute;
    inset: -2px -2px -2px -1px;
    border: 2px solid #5b8bd0;
}

.ref-box i {
    position: absolute;
    width: 7px;
    height: 7px;
    border: 1px solid #fff;
    background: #5b8bd0;
}

.ref-box i:nth-child(1) { left: -4px; top: -4px; }
.ref-box i:nth-child(2) { right: -4px; top: -4px; }
.ref-box i:nth-child(3) { left: -4px; bottom: -4px; }
.ref-box i:nth-child(4) { right: -4px; bottom: -4px; }

.edit {
    position: relative;
}

.edit-box {
    position: absolute;
    inset: -2px -2px -2px -1px;
    border: 2px solid #217346;
    background: #fff;
    color: #111;
    font: 13px/28px "Liberation Mono", monospace;
}

.edit-box::before {
    content: "";
    position: absolute;
    right: -3px;
    bottom: -3px;
    width: 6px;
    height: 6px;
    border: 1px solid #fff;
    background: #217346;
}

.edit-box::after {
    content: "";
    display: inline-block;
    width: 1px;
    height: 17px;
    background: #000;
    vertical-align: middle;
}

.edit-box em {
    color: #5b8bd0;
    font-style: normal;
}

.click {
    position: absolute;
    left: 22px;
    top: -29px;
    width: 80px;
    height: 80px;
    border-radius: 50%;
    background: rgba(255, 138, 82, 0.75);
}

.ibeam {
    position: absolute;
    left: 61px;
    top: 4px;
}

/* scroll bars */
.tri {
    border: 4px solid transparent;
}

.up { border-bottom-color: #666; border-top: none; }
.down { border-top-color: #666; border-bottom: none; }
.left { border-right-color: #666; border-left: none; }
.right { border-left-color: #666; border-right: none; }

.vscroll, .hscroll {
    display: flex;
}

.vscroll {
    flex-direction: column;
    width: 15px;
    margin: 0 3px;
    background: #ececec;
}

.vscroll button, .hscroll button {
    flex: none;
    width: 15px;
    height: 15px;
    justify-content: center;
    border: 1px solid #ababab;
    background: #fff;
}

.thumb {
    flex: 1;
    border: 1px solid #ababab;
    background: #fff;
}

.vscroll .thumb { margin-top: 26px; border-bottom: none; }
.hscroll .thumb { margin-right: 57px; }

.sheet-tabs {
    flex: none;
    display: flex;
    height: 28px;
    padding-right: 21px;
    border-top: 1px solid #ababab;
    background: #f5f5f5;
}

.nav {
    width: 28px;
    justify-content: center;
}

.nav:first-child { margin-left: 15px; }
.nav .left { border-right-color: #bbb; }
.nav .right { border-left-color: #bbb; }

.sheet-tab {
    width: 73px;
    height: 25px;
    justify-content: center;
    margin: -1px 32px 0 29px;
    border: 1px solid #ababab;
    border-top: none;
    border-bottom: 2px solid #217346;
    background: #fff;
    color: #217346;
    font: 12px "Liberation Mono", monospace;
}

.sheet-tabs .dots {
    margin: 7px 5px 7px auto;
}

.hscroll {
    width: 539px;
    height: 16px;
    margin-top: 6px;
    background: #ececec;
}

.hscroll button { height: 16px; }

/* status bar */
.status {
    flex: none;
    display: flex;
    align-items: center;
    gap: 18px;
    height: 23px;
    padding: 0 8px 0 7px;
    background: #217346;
    color: #e6f2ea;
}

.status-right {
    display: flex;
    align-items: center;
    margin-left: auto;
}

.status-right button {
    width: 38px;
    justify-content: center;
}

.zoom-sign {
    width: 16px;
    color: #0d4d28;
    font: bold 14px "Noto Sans", sans-serif;
    text-align: center;
}

.status input {
    width: 100px;
    height: 8px;
    margin: 0;
    appearance: none;
    background: linear-gradient(#cfe5d6, #cfe5d6) center / 100% 1px no-repeat;
}

.status input::-webkit-slider-thumb {
    appearance: none;
    width: 1px;
    height: 6px;
    background: #fff;
}

.zoom {
    width: 39px;
    text-align: right;
    color: #a9d6b9;
}

/* taskbar */
.taskbar {
    flex: none;
    display: flex;
    align-items: center;
    height: 39px;
    border-top: 1px solid #4a5a5c;
    background:
        linear-gradient(11deg, transparent 36%, rgba(30, 36, 46, 0.9) 48%, transparent 60%) 720px 0 / 240px 39px no-repeat,
        radial-gradient(ellipse 90px 26px at 1150px 38px, rgba(32, 37, 47, 0.8) 20%, transparent),
        linear-gradient(90deg, #6b7586 0, #556070 60px, #7d8797 220px, #77808f 460px, #6f7a8c 640px, #858fa2 800px, #7c8699 920px, #848da0 970px, #565f6d 1030px, #4b5462 1200px, #5a6370 1300px, #3a414d 100%);
    color: #fff;
}

.start { margin: 0 10px 0 8px; }

.grip {
    width: 9px;
    height: 30px;
    background: radial-gradient(circle, #20252e 1px, transparent 1px) 0 0 / 3px 3px;
}

.pin { margin: 0 17px 0 25px; }

.apps {
    display: flex;
    gap: 3px;
    height: 100%;
}

.app {
    width: 59px;
    justify-content: center;
    border: 1px solid #39414f;
    border-radius: 3px;
    background: linear-gradient(rgba(255, 255, 255, 0.45), rgba(255, 255, 255, 0.2));
    box-shadow: inset 0 0 0 1px rgba(255, 255, 255, 0.4);
}

.app.active {
    background: linear-gradient(rgba(255, 255, 255, 0.75), rgba(255, 255, 255, 0.5));
}

.ps {
    width: 28px;
    height: 28px;
    border: 2px solid #8bbdf3;
    background: #14145c;
    color: #a9cdfa;
    font: bold 16px/23px "Open Sans", sans-serif;
    text-align: center;
}

.tray {
    display: flex;
    align-items: center;
    gap: 9px;
    height: 100%;
    margin-left: auto;
}

.clock {
    display: flex;
    flex-direction: column;
    align-items: center;
    width: 76px;
    margin-right: 4px;
    margin-left: 3px;
    font-size: 12px;
    line-height: 18px;
}

.notify {
    display: flex;
    width: 28px;
    align-items: center;
}

.notify b {
    flex: none;
    width: 16px;
    height: 16px;
    margin: 10px 0 0 -8px;
    border: 1px solid #ddd;
    border-radius: 50%;
    background: #20252e;
    font: 11px/14px "Noto Sans", sans-serif;
    text-align: center;
}

.desktop {
    width: 13px;
    height: 100%;
    border: 1px solid #8b95a3;
    background: linear-gradient(#6b7480, #2c323c);
}

/* floating input method bar */
.ime {
    position: absolute;
    right: 2px;
    top: 517px;
    display: flex;
    align-items: center;
    justify-content: space-between;
    width: 209px;
    height: 25px;
    padding: 0 9px 0 5px;
    border: 1px solid #ddd;
    border-radius: 5px;
    background: #fbfcfd;
    box-shadow: 0 1px 2px rgba(0, 0, 0, 0.15);
    color: #2d83cc;
}

.ime b {
    font-size: 15px;
    line-height: 20px;
    font-weight: 500;
}

.wan {
    display: flex;
    padding: 2px;
    border-radius: 2px;
    background: #e0561f;
}
```
